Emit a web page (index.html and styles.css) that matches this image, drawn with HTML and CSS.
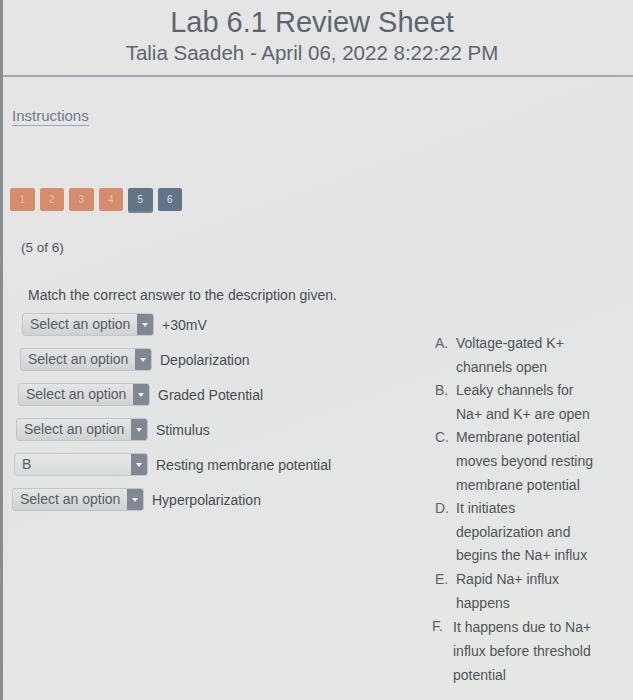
FILE: index.html
```html
<!DOCTYPE html>
<html>
<head>
<meta charset="utf-8">
<link rel="stylesheet" href="styles.css">
</head>
<body>
<div class="page">
  <header class="header">
    <h1 class="title">Lab 6.1 Review Sheet</h1>
    <div class="subtitle">Talia Saadeh - April 06, 2022 8:22:22 PM</div>
  </header>
  <main class="main">
    <a class="instructions">Instructions</a>
    <nav class="pager">
      <span class="pg done">1</span>
      <span class="pg done">2</span>
      <span class="pg done">3</span>
      <span class="pg done">4</span>
      <span class="pg todo current">5</span>
      <span class="pg todo">6</span>
    </nav>
    <div class="count">(5 of 6)</div>
    <div class="question">
      <div class="left">
        <p class="prompt">Match the correct answer to the description given.</p>
        <div class="rows">
          <div class="row r1"><div class="sel"><span class="val">Select an option</span><span class="arr"></span></div><span class="lbl">+30mV</span></div>
          <div class="row r2"><div class="sel"><span class="val">Select an option</span><span class="arr"></span></div><span class="lbl">Depolarization</span></div>
          <div class="row r3"><div class="sel"><span class="val">Select an option</span><span class="arr"></span></div><span class="lbl">Graded Potential</span></div>
          <div class="row r4"><div class="sel"><span class="val">Select an option</span><span class="arr"></span></div><span class="lbl">Stimulus</span></div>
          <div class="row r5"><div class="sel chosen"><span class="val">B</span><span class="arr"></span></div><span class="lbl">Resting membrane potential</span></div>
          <div class="row r6"><div class="sel"><span class="val">Select an option</span><span class="arr"></span></div><span class="lbl">Hyperpolarization</span></div>
        </div>
      </div>
      <ol class="answers">
        <li><span class="let">A.</span><span class="txt">Voltage-gated K+ channels open</span></li>
        <li><span class="let">B.</span><span class="txt">Leaky channels for Na+ and K+ are open</span></li>
        <li><span class="let">C.</span><span class="txt">Membrane potential moves beyond resting membrane potential</span></li>
        <li><span class="let">D.</span><span class="txt">It initiates depolarization and begins the Na+ influx</span></li>
        <li><span class="let">E.</span><span class="txt">Rapid Na+ influx happens</span></li>
        <li class="f"><span class="let">F.</span><span class="txt">It happens due to Na+ influx before threshold potential</span></li>
      </ol>
    </div>
  </main>
</div>
</body>
</html>
```

FILE: styles.css
```css
html, body {
  margin: 0;
  padding: 0;
  height: 100%;
}
body {
  font-family: "Liberation Sans", Arial, sans-serif;
  color: #4d5257;
  background: #e3e5e3;
}
.page {
  min-height: 700px;
  border-left: 3px solid #8a8d90;
  background: linear-gradient(160deg, #e6e5e5 0%, #e2e5e3 50%, #e6e8e6 100%);
  box-sizing: border-box;
}
.header {
  height: 77px;
  border-bottom: 2px solid #a3aab0;
  text-align: center;
  box-sizing: border-box;
  padding-top: 6px;
  padding-right: 12px;
}
.title {
  margin: 0;
  font-weight: normal;
  font-size: 29px;
  line-height: 33px;
  color: #5c6570;
}
.subtitle {
  font-size: 20.5px;
  line-height: 28px;
  color: #5c6570;
}
.main {
  padding: 30px 0 0 9px;
}
.instructions {
  display: inline-block;
  font-size: 15px;
  line-height: 18px;
  color: #6c7990;
  border-bottom: 1px solid #9aa6b8;
}
.pager {
  display: flex;
  gap: 5px;
  margin-top: 62px;
  margin-left: -2px;
}
.pg {
  width: 24.5px;
  height: 23px;
  border-radius: 2px;
  font-size: 10px;
  line-height: 23px;
  text-align: center;
}
.done {
  background: #d68d6e;
  color: #ecc0ac;
}
.todo {
  background: #627488;
  color: #dfe5ec;
}
.current {
  box-shadow: 0 2px 0 #7d858d;
}
.count {
  margin-top: 28px;
  margin-left: 9px;
  font-size: 13.5px;
  line-height: 18px;
  color: #50555a;
}
.question {
  display: flex;
  align-items: flex-start;
}
.left {
  width: 423px;
}
.prompt {
  margin: 29px 0 9px 16px;
  font-size: 14px;
  line-height: 18px;
  color: #474c51;
}
.rows {
  display: flex;
  flex-direction: column;
  gap: 12px;
}
.row {
  display: flex;
  align-items: center;
  gap: 8px;
}
.r1 { margin-left: 10px; }
.r2 { margin-left: 8px; }
.r3 { margin-left: 6px; }
.r4 { margin-left: 4px; }
.r5 { margin-left: 2px; }
.r6 { margin-left: 0; }
.sel {
  display: flex;
  width: 132px;
  height: 23px;
  border: 1px solid #c2c6c9;
  border-radius: 3px;
  background: linear-gradient(#e4e6e6, #cfd2d3);
  box-sizing: border-box;
  overflow: hidden;
}
.chosen {
  width: 134px;
  background: linear-gradient(#e6e8e8, #d7dadb);
}
.val {
  flex: 1;
  padding-left: 7px;
  font-size: 14px;
  line-height: 21px;
  color: #575c61;
  white-space: nowrap;
}
.arr {
  width: 16px;
  background: #7f8893;
  position: relative;
}
.arr::after {
  content: "";
  position: absolute;
  left: 5px;
  top: 9px;
  border-left: 3px solid transparent;
  border-right: 3px solid transparent;
  border-top: 4px solid #f2f4f6;
}
.lbl {
  font-size: 14px;
  line-height: 18px;
  color: #474c51;
  white-space: nowrap;
}
.answers {
  list-style: none;
  margin: 75px 0 0 0;
  padding: 0;
  width: 170px;
  font-size: 14px;
  line-height: 23.6px;
  color: #4f5459;
}
.answers li {
  display: flex;
}
.let {
  width: 21px;
  flex: none;
  color: #5d6267;
}
.txt {
  width: 145px;
}
.f {
  margin-left: -3px;
}
.f .txt {
  line-height: 24px;
}
```
